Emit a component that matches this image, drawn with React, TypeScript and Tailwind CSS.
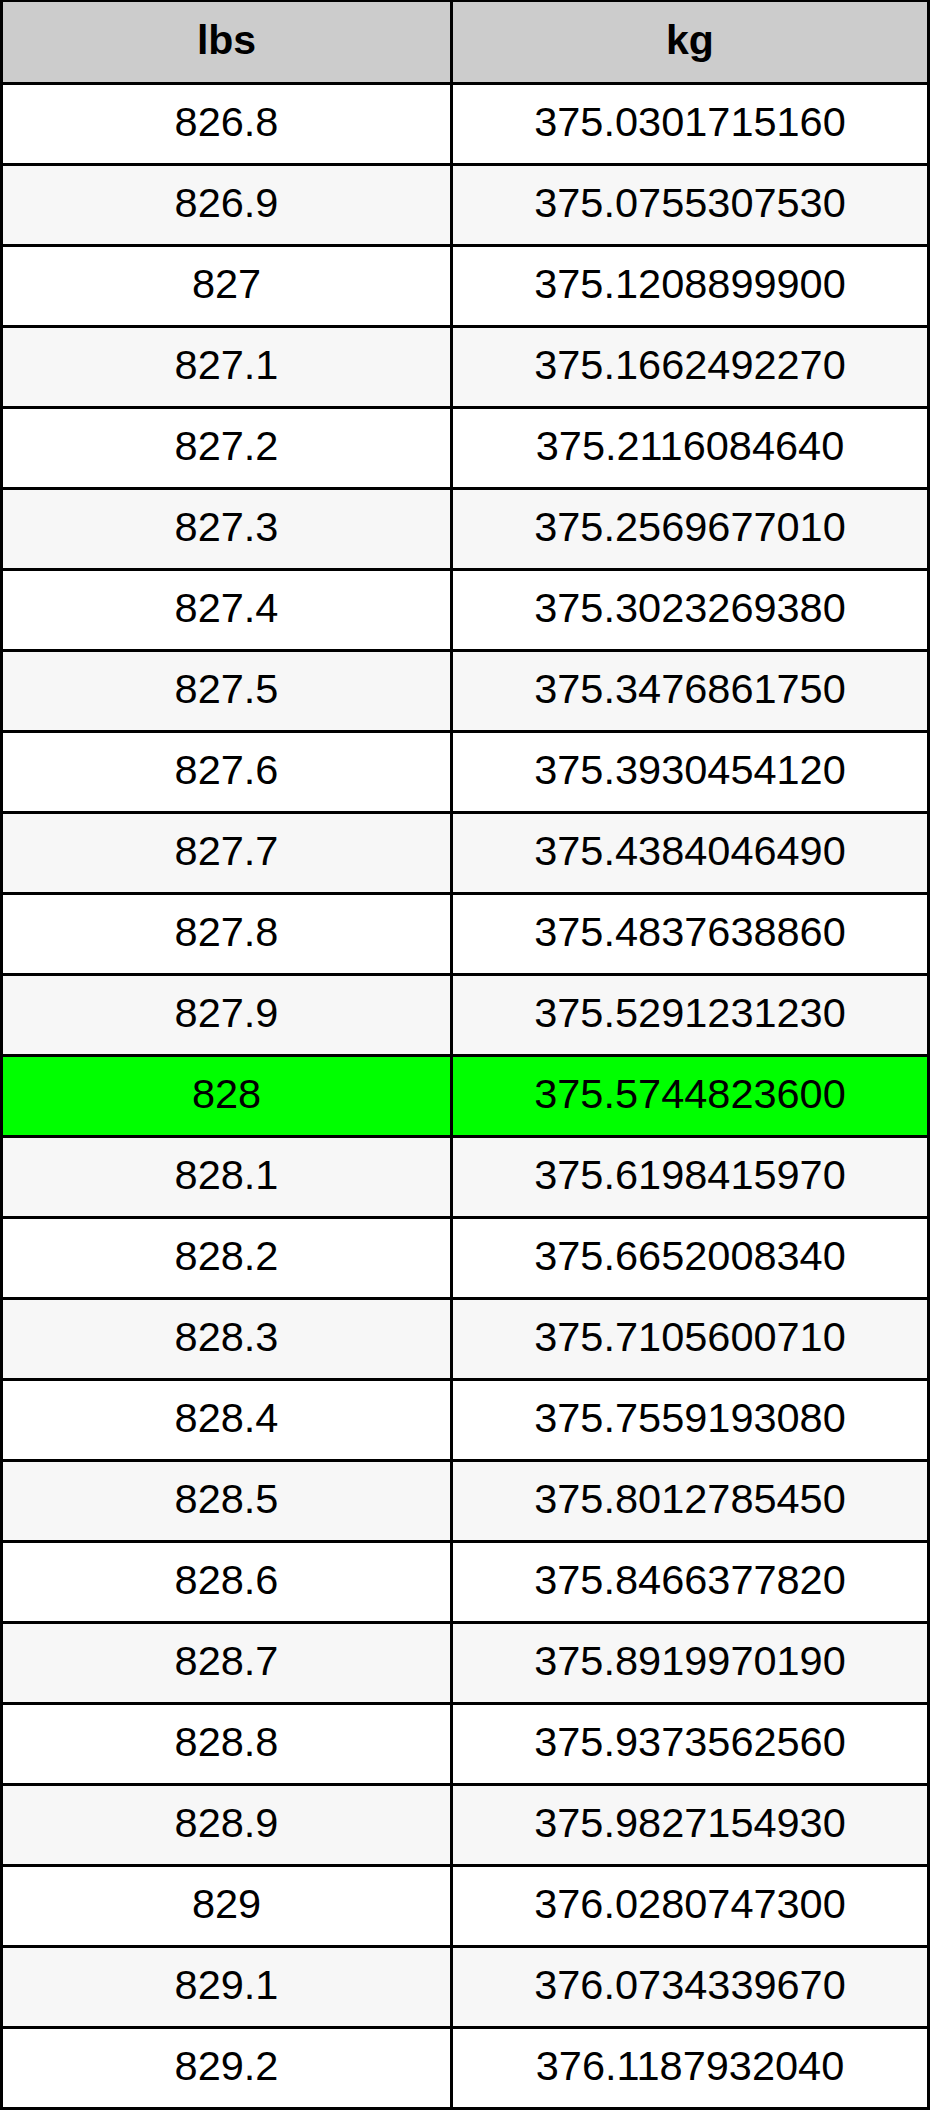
import React from 'react';

// lbs -> kg conversion rows, 828 is highlighted
const rows: [string, string][] = [
  ['826.8', '375.0301715160'],
  ['826.9', '375.0755307530'],
  ['827', '375.1208899900'],
  ['827.1', '375.1662492270'],
  ['827.2', '375.2116084640'],
  ['827.3', '375.2569677010'],
  ['827.4', '375.3023269380'],
  ['827.5', '375.3476861750'],
  ['827.6', '375.3930454120'],
  ['827.7', '375.4384046490'],
  ['827.8', '375.4837638860'],
  ['827.9', '375.5291231230'],
  ['828', '375.5744823600'],
  ['828.1', '375.6198415970'],
  ['828.2', '375.6652008340'],
  ['828.3', '375.7105600710'],
  ['828.4', '375.7559193080'],
  ['828.5', '375.8012785450'],
  ['828.6', '375.8466377820'],
  ['828.7', '375.8919970190'],
  ['828.8', '375.9373562560'],
  ['828.9', '375.9827154930'],
  ['829', '376.0280747300'],
  ['829.1', '376.0734339670'],
  ['829.2', '376.1187932040'],
];

const App: React.FC = () => {
  return (
    <div className="w-[930px] bg-white font-['Liberation_Sans',Arial,sans-serif] text-black">
      <div className="grid grid-cols-[450px_477px] border-l-[3px] border-t-[2px] border-black">
        <div className="flex h-[83px] items-center justify-center border-b-[3px] border-r-[3px] border-black bg-[#cccccc] pb-[2px] text-[41px] font-bold">
          lbs
        </div>
        <div className="flex h-[83px] items-center justify-center border-b-[3px] border-r-[3px] border-black bg-[#cccccc] pb-[2px] text-[41px] font-bold">
          kg
        </div>
        {rows.map(([lbs, kg], i) => {
          const bg = lbs === '828' ? 'bg-[#00ff00]' : i % 2 === 1 ? 'bg-[#f7f7f7]' : 'bg-white';
          return (
            <React.Fragment key={lbs}>
              <div className={`flex h-[81px] items-center justify-center border-b-[3px] border-r-[3px] border-black pb-[3px] text-[41.5px] ${bg}`}>
                {lbs}
              </div>
              <div className={`flex h-[81px] items-center justify-center border-b-[3px] border-r-[3px] border-black pb-[3px] text-[41.5px] ${bg}`}>
                {kg}
              </div>
            </React.Fragment>
          );
        })}
      </div>
    </div>
  );
};

export default App;
